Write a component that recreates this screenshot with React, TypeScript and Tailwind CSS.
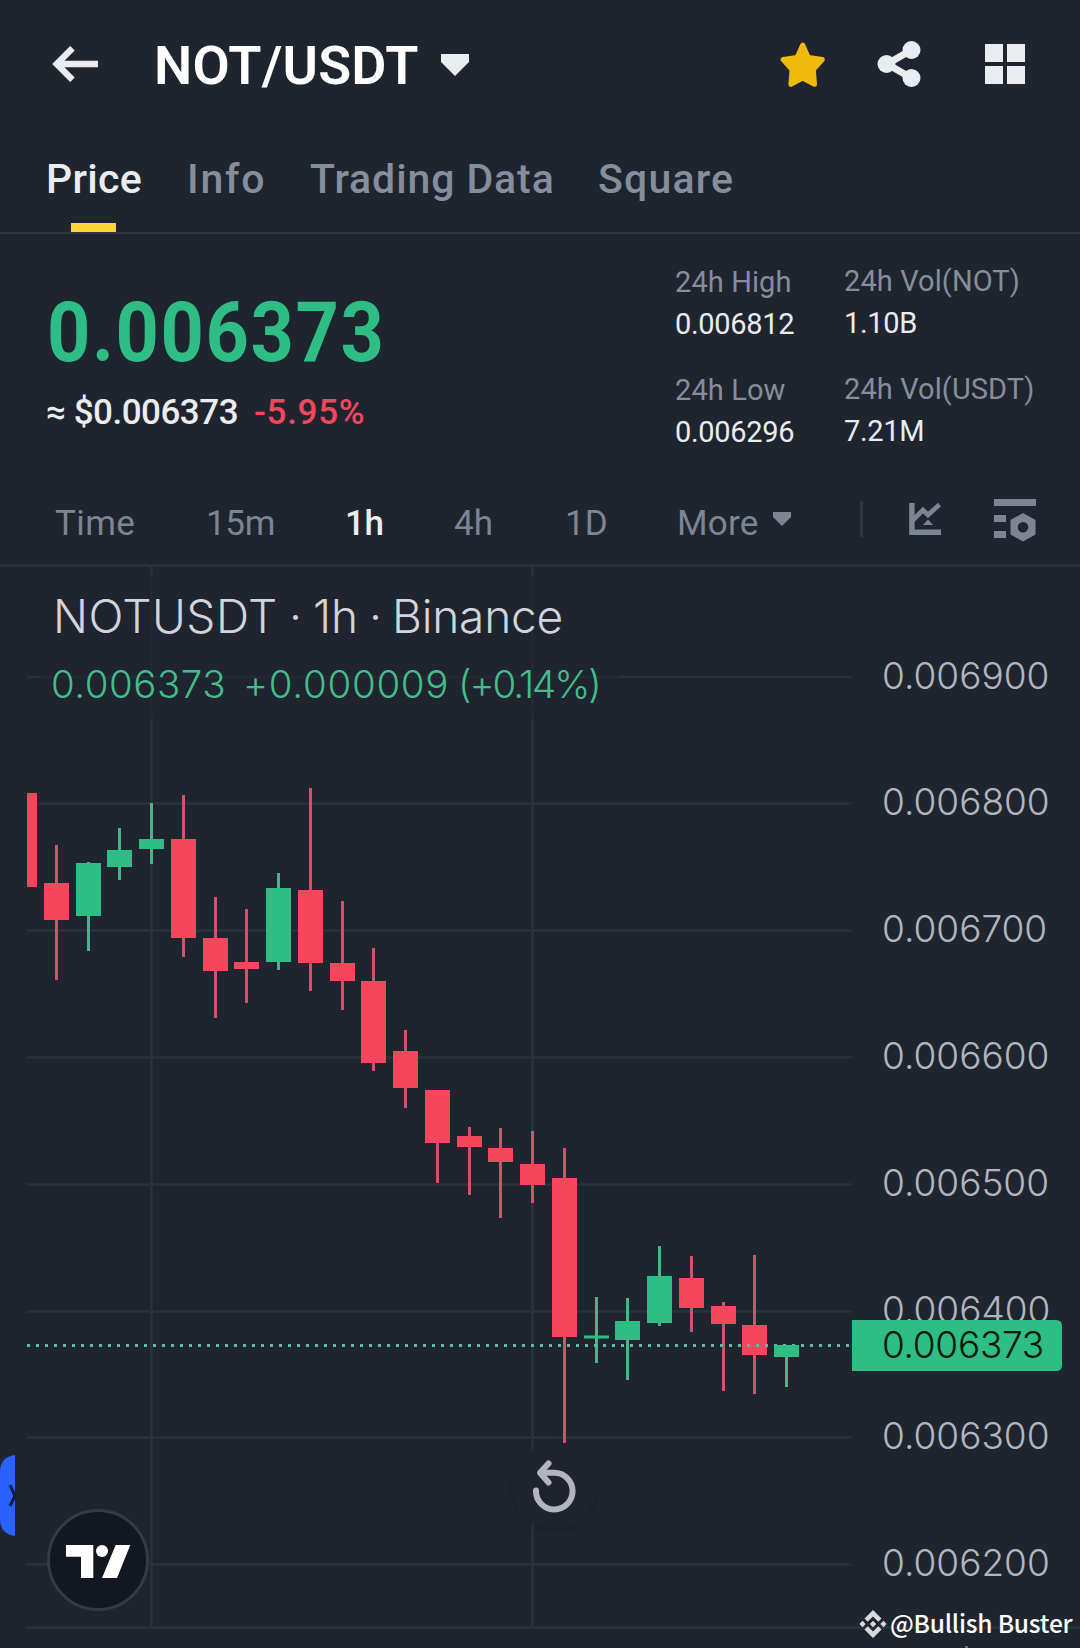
import React from 'react';

type Candle = { x: number; open: number; close: number; high: number; low: number; up?: boolean };

const UP = '#2ebd85';
const DOWN = '#f6465d';

// x is the candle centre, the other values are pixel rows of the chart
const candles: Candle[] = [
  { x: 56.5, high: 845, open: 883, close: 920, low: 980 },
  { x: 88.5, high: 862, open: 863, close: 916, low: 951, up: true },
  { x: 119.5, high: 828, open: 850, close: 867, low: 880, up: true },
  { x: 151.5, high: 803, open: 839, close: 849, low: 864, up: true },
  { x: 183.5, high: 795, open: 839, close: 938, low: 957 },
  { x: 215.5, high: 897, open: 938, close: 971, low: 1018 },
  { x: 246.5, high: 909, open: 962, close: 969, low: 1003 },
  { x: 278.5, high: 873, open: 888, close: 962, low: 970, up: true },
  { x: 310.5, high: 788, open: 890, close: 963, low: 991 },
  { x: 342.5, high: 901, open: 963, close: 981, low: 1010 },
  { x: 373.5, high: 948, open: 981, close: 1063, low: 1071 },
  { x: 405.5, high: 1030, open: 1051, close: 1088, low: 1108 },
  { x: 437.5, high: 1090, open: 1090, close: 1143, low: 1183 },
  { x: 469.5, high: 1127, open: 1136, close: 1147, low: 1195 },
  { x: 500.5, high: 1128, open: 1148, close: 1162, low: 1218 },
  { x: 532.5, high: 1131, open: 1164, close: 1185, low: 1203 },
  { x: 564.5, high: 1148, open: 1178, close: 1337, low: 1443 },
  { x: 596.5, high: 1297, open: 1335.5, close: 1338.5, low: 1363, up: true },
  { x: 627.5, high: 1298, open: 1321, close: 1340, low: 1380, up: true },
  { x: 659.5, high: 1246, open: 1276, close: 1323, low: 1326, up: true },
  { x: 691.5, high: 1256, open: 1278, close: 1308, low: 1332 },
  { x: 723.5, high: 1302, open: 1306, close: 1324, low: 1391 },
  { x: 754.5, high: 1255, open: 1325, close: 1355, low: 1394 },
  { x: 786.5, high: 1345, open: 1345, close: 1357, low: 1387, up: true },
];

const priceLevels = [
  { label: '0.006900', y: 677 },
  { label: '0.006800', y: 803.5 },
  { label: '0.006700', y: 930.5 },
  { label: '0.006600', y: 1057.5 },
  { label: '0.006500', y: 1184.5 },
  { label: '0.006400', y: 1311.5 },
  { label: '0.006300', y: 1437.5 },
  { label: '0.006200', y: 1564.5 },
];

const Caret = ({ className }: { className: string }) => (
  <svg viewBox="0 0 28 22" preserveAspectRatio="none" className={className} fill="currentColor">
    <path d="M0 0H28V8L14 22L0 8Z" />
  </svg>
);

const Header = () => (
  <header className="flex h-32 items-center pl-[52px] text-[#eaecef]">
    <svg viewBox="0 0 46 36" className="h-9 w-[46px]" fill="none" stroke="currentColor" strokeWidth="6.4">
      <path d="M46 18H5M20.500 2.200L4.700 18L20.500 33.800" />
    </svg>
    <h1 className="ml-14 w-[287px] pt-1 whitespace-nowrap text-[54px] leading-none font-semibold tracking-[0.2px] text-white">
      NOT/USDT
    </h1>
    <Caret className="mt-0.5 h-[22px] w-7" />
    <svg viewBox="0 0 46 46" className="mt-0.5 ml-[311px] h-[46px] w-[46px]" fill="#f0b90b" stroke="#f0b90b" strokeWidth="5" strokeLinejoin="round">
      <path d="M22.700 3L28.300 15.500L42.300 17.500L33.300 27.500L34.500 42.300L22.700 36L10.900 42.300L12.100 27.500L3.100 17.500L17.100 15.500Z" />
    </svg>
    <svg viewBox="0 0 44 46" className="ml-[51px] h-[46px] w-11" fill="currentColor">
      <path d="M34.500 9L10 23L34.500 37" fill="none" stroke="currentColor" strokeWidth="7" />
      <circle cx="34.500" cy="9" r="9" />
      <circle cx="9.500" cy="23" r="9" />
      <circle cx="34.500" cy="37" r="9" />
    </svg>
    <div className="ml-16 grid h-10 w-10 grid-cols-2 gap-[4.500px]">
      <i className="bg-[#eaecef]" />
      <i className="bg-[#eaecef]" />
      <i className="bg-[#eaecef]" />
      <i className="bg-[#eaecef]" />
    </div>
  </header>
);

const Tabs = () => (
  <nav className="flex h-[106px] border-b-2 border-[#2f3740] pl-[46px] text-[41px] leading-[102px] font-medium whitespace-nowrap text-[#848e9c]">
    <div className="relative w-[141px] tracking-[0.3px] text-[#eaecef]">
      Price
      <span className="absolute bottom-0 left-[25px] h-[9px] w-[45px] bg-[#fcd535]" />
    </div>
    <div className="w-[123px] tracking-[1.8px]">Info</div>
    <div className="w-[288px] tracking-[0.9px]">Trading Data</div>
    <div className="tracking-[1.2px]">Square</div>
  </nav>
);

const Stat = ({ label, value }: { label: string; value: string }) => (
  <div className="h-[108px]">
    <div className="text-[29px] leading-[42px] tracking-[0.100px] text-[#848e9c]">{label}</div>
    <div className="text-[29px] leading-[42px] tracking-[-0.3px] text-[#eaecef]">{value}</div>
  </div>
);

const Ticker = () => (
  <section className="flex h-[244px] pl-[46px] whitespace-nowrap">
    <div className="w-[629px] pt-[55px]">
      {/* Narrow digits */}
      <div className="ml-px origin-left scale-x-[0.9] text-[84px] leading-[88px] font-bold tracking-[1.800px] text-[#2ebd85]">0.006373</div>
      <div className="mt-4 flex text-[35px] leading-10 font-medium text-[#eaecef]">
        <span className="w-[208px] tracking-[-0.500px]">≈ $0.006373</span>
        <span className="tracking-[0.700px] text-[#f6465d]">-5.95%</span>
      </div>
    </div>
    <div className="w-[169px] pt-[27px]">
      <Stat label="24h High" value="0.006812" />
      <Stat label="24h Low" value="0.006296" />
    </div>
    <div className="pt-[26px]">
      <Stat label="24h Vol(NOT)" value="1.10B" />
      <Stat label="24h Vol(USDT)" value="7.21M" />
    </div>
  </section>
);

const Intervals = () => (
  <div className="flex h-[86px] items-center pl-[55px] text-[35px] leading-none whitespace-nowrap text-[#7d8594]">
    <span className="w-[151px] pt-1 tracking-[0.400px]">Time</span>
    <span className="w-[139px] pt-1 tracking-[-0.300px]">15m</span>
    <span className="w-[109px] pt-1 font-medium tracking-[-0.500px] text-[#eaecef]">1h</span>
    <span className="w-[111px] pt-1">4h</span>
    <span className="w-[112px] pt-1">1D</span>
    <span className="w-[96px] pt-1 tracking-[0.200px]">More</span>
    <Caret className="mb-1 h-[14px] w-[18px]" />
    <span className="mb-1 ml-[69px] h-9 w-[3px] bg-[#2f3740]" />
    <svg viewBox="0 0 32 32" className="mb-1 ml-[46px] h-8 w-8" fill="none" stroke="currentColor" strokeWidth="5.400">
      <path d="M2.900 0V29.200H32" />
      <path d="M4 17L14 7L19 12L30.500 1.500" strokeWidth="4.600" />
      <path d="M19 16.500L24 22H14Z" fill="currentColor" stroke="none" />
    </svg>
    <svg viewBox="0 0 42 44" className="ml-[53px] h-11 w-[42px]" fill="currentColor">
      <path d="M0 0H42V7H0ZM0 16H12V23H0ZM0 32H12V39H0Z" />
      <path fillRule="evenodd" d="M29 14L41.500 21V35.500L29 42.500L16.500 35.500V21ZM29 23A5.300 5.300 0 1 0 29 33.600A5.300 5.300 0 1 0 29 23Z" />
    </svg>
  </div>
);

const Chart = () => (
  <svg viewBox="0 564 1080 1084" className="block h-[1084px] w-[1080px]" style={{ fontFamily: 'Inter, sans-serif', fontWeight: 300 }}>
    {/* Grid */}
    <g stroke="#2a323c" strokeWidth="2.600">
      <path d="M0 565.500H1080M27 1627.500H1080" />
      <path d="M151.500 565V1627M532.500 565V1627" />
      {priceLevels.map((level) => (
        <path key={level.label} d={`M27 ${level.y}H852`} />
      ))}
    </g>
    <rect x="39" y="575" width="580" height="144" fill="#1f252f" fillOpacity=".6" />

    {/* Legend */}
    <g fontSize="46" fill="#d1d4dc">
      <text x="53" y="633" letterSpacing=".500">NOTUSDT</text>
      <text x="289" y="633">·</text>
      <text x="313" y="633">1h</text>
      <text x="369" y="633">·</text>
      <text x="392" y="633" letterSpacing="-.200">Binance</text>
    </g>
    <g fontSize="38.500" fill="#42bd8c">
      <text x="51" y="697.500" letterSpacing=".500">0.006373</text>
      <text x="243" y="697.500" letterSpacing=".700">+0.000009</text>
      <text x="458" y="697.500" letterSpacing="-2">(+0.14%)</text>
    </g>

    {/* Candles */}
    <rect x="27" y="793" width="10" height="94" fill={DOWN} />
    {candles.map((c) => (
      <g key={c.x} fill={c.up ? UP : DOWN}>
        <rect x={c.x - 1.5} y={c.high} width="3" height={c.low - c.high} fill={c.up ? '#4bb28a' : '#cf5468'} />
        <rect x={c.x - 12.5} y={c.open} width="25" height={c.close - c.open} />
      </g>
    ))}
    <path d="M27 1345.500H852" stroke="#5cbd98" strokeWidth="3" strokeDasharray="3 6" />
    <rect x="774" y="1345" width="25" height="12" fill={UP} />

    {/* Price axis */}
    <g fontSize="37" fill="#b2b5be">
      {priceLevels.map((level) => (
        <text key={level.label} x="882" y={level.y + 11.8}>{level.label}</text>
      ))}
    </g>
    <path d="M852 1320H1056Q1062 1320 1062 1326V1365Q1062 1371 1056 1371H852Z" fill={UP} />
    <text x="882" y="1358" fontSize="37" letterSpacing="-.300" fill="#06180c">0.006373</text>

    {/* Drawer handle */}
    <path d="M15 1455Q0 1457 0 1472V1519Q0 1534 15 1536Z" fill="#2962ff" />
    <path d="M10 1485L15 1496L10 1506" fill="none" stroke="#101b3d" strokeWidth="3" />

    {/* Reset button */}
    <circle cx="554" cy="1487" r="42" fill="#1f232e" className="drop-shadow-[0_3px_4px_rgba(0,0,0,0.2)]" />
    <g fill="none" stroke="#b2b5be" strokeWidth="6" strokeLinecap="round" strokeLinejoin="round">
      <path d="M536 1490.500A18.300 18.300 0 1 0 554 1472.800H541" />
      <path d="M548.500 1463.500L540 1472.800L548.500 1482.500" />
    </g>

    {/* TradingView badge */}
    <circle cx="98" cy="1560" r="49.500" fill="#131722" stroke="#363a45" strokeWidth="3" />
    <g fill="#fff">
      <path d="M66 1545H93.300V1578H81V1556.700H66Z" />
      <circle cx="102" cy="1551" r="6" />
      <path d="M115.700 1545H130.300L117 1578H102Z" />
    </g>

    {/* Author mark */}
    <g fill="#d9dadb">
      <path d="M873 1610L881.500 1618.500L878.300 1621.700L873 1616.400L867.700 1621.700L864.500 1618.500Z" />
      <path d="M873 1638L881.500 1629.500L878.300 1626.300L873 1631.600L867.700 1626.300L864.500 1629.500Z" />
      <path d="M873 1620.800L876.200 1624L873 1627.200L869.800 1624ZM862.500 1620.800L865.700 1624L862.500 1627.200L859.300 1624ZM883.500 1620.800L886.700 1624L883.500 1627.200L880.300 1624Z" />
    </g>
    <text x="890" y="1632.500" fontSize="24.500" letterSpacing="-.200" fontWeight="500" fill="#fff" fontFamily="'Noto Sans CJK SC', sans-serif">@Bullish Buster</text>
    <rect x="965" y="1646" width="3" height="2" fill="#6b7079" />
  </svg>
);

export default function App() {
  return (
    <main className="h-[1648px] w-[1080px] overflow-hidden bg-[#1f252f] font-[Roboto,sans-serif]">
      <Header />
      <Tabs />
      <Ticker />
      <Intervals />
      <Chart />
    </main>
  );
}
